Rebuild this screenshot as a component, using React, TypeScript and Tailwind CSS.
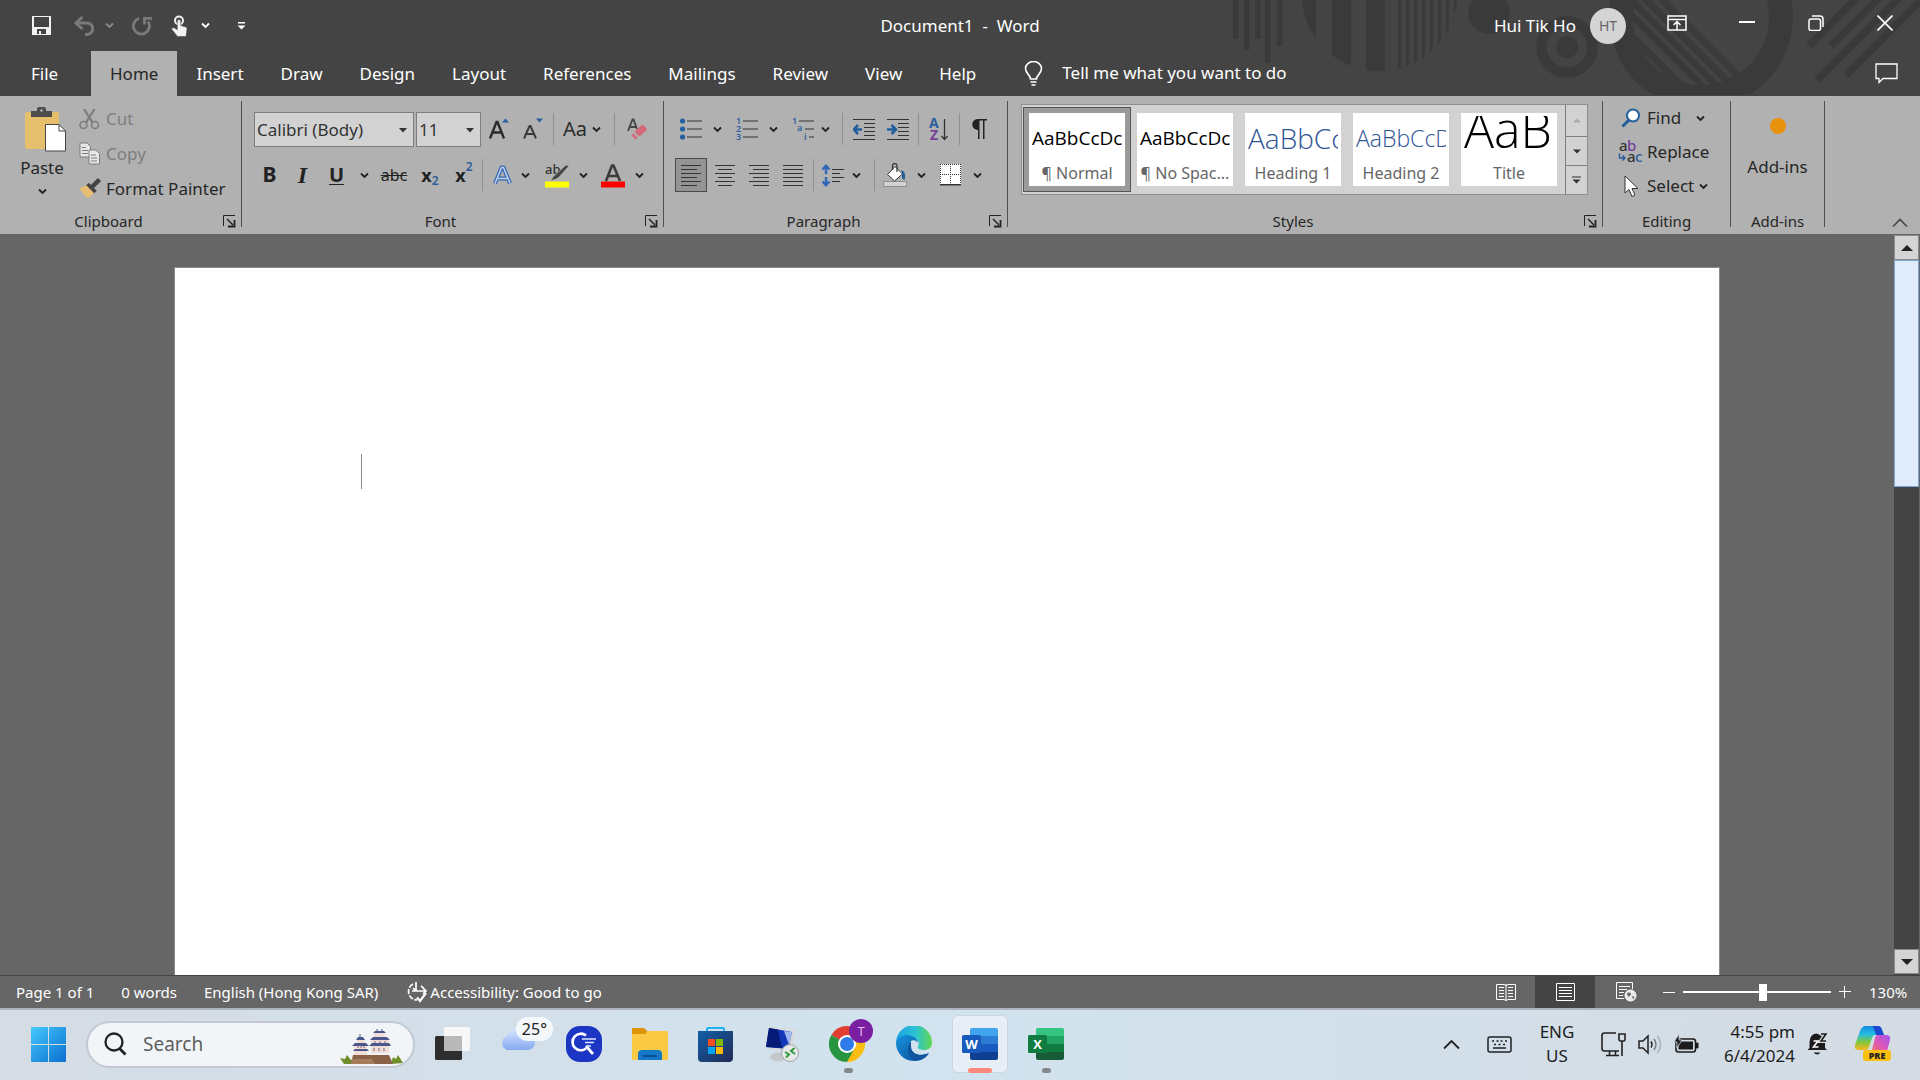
import React from "react";

type Kids = { children?: React.ReactNode };

function Chev({ className = "text-[#222]" }: { className?: string }) {
  return (
    <svg width="9" height="7" viewBox="0 0 9 7" fill="none" className={`shrink-0 ${className}`} aria-hidden="true">
      <path d="M1 1.5 4.5 5 8 1.5" stroke="currentColor" strokeWidth="1.8" />
    </svg>
  );
}

function Btn({ w, label, className = "", children }: Kids & { w: string; label: string; className?: string }) {
  return (
    <button aria-label={label} className={`flex h-[34px] shrink-0 items-center justify-center ${w} ${className}`}>
      {children}
    </button>
  );
}

function Sep() {
  return <span className="h-8 w-px shrink-0 bg-[#8f8f8f]" />;
}

function Launcher({ label }: { label: string }) {
  return (
    <button aria-label={label} className="flex w-6 items-center justify-center">
      <svg width="13" height="13" viewBox="0 0 13 13" fill="none" stroke="#222" aria-hidden="true">
        <path d="M.5 11V.5H12" />
        <path d="M4 4l6 6" strokeWidth="1.4" />
        <path d="M11.5 5v6.5H5" strokeWidth="1.8" />
      </svg>
    </button>
  );
}

function Group({ title, w, launcher, children }: Kids & { title: string; w: string; launcher?: boolean }) {
  return (
    <section aria-label={title} className={`flex shrink-0 pt-[5px] ${w}`}>
      <div className="flex min-w-0 flex-1 flex-col">
        <div className="flex-1">{children}</div>
        <div className="mb-[3px] flex h-5 items-center text-[15px] leading-5 text-[#262626]">
          <span className="flex-1 text-center">{title}</span>
          {launcher && <Launcher label={`${title} settings`} />}
        </div>
      </div>
      <div className="mb-[7px] w-px bg-[#4f4f4f]" />
    </section>
  );
}

function HeaderArt() {
  const bars: [number, number][] = [[33, 39], [44, 50], [55, 39], [65, 63], [77, 46]];
  const stripes: [number, number][] = [
    [102, 14], [132, 19], [166, 19], [198, 3], [206, 3], [214, 3], [222, 3], [230, 3], [238, 3], [246, 3], [254, 3],
  ];
  return (
    <svg className="absolute right-0 top-0" width="720" height="96" viewBox="0 0 720 96" fill="#3a3a3a" aria-hidden="true">
      <defs>
        <clipPath id="disc"><circle cx="179.5" cy="-6.8" r="78" /></clipPath>
        <clipPath id="hole"><circle cx="501" cy="17" r="68" /></clipPath>
      </defs>
      {bars.map(([x, h]) => <rect key={x} x={x} y="0" width="5.5" height={h} />)}
      <g clipPath="url(#disc)">
        {stripes.map(([x, w]) => <rect key={x} x={x} y="0" width={w} height="80" />)}
      </g>
      <circle cx="289" cy="13" r="20.7" />
      <circle cx="367" cy="47" r="25.5" fill="none" stroke="#3a3a3a" strokeWidth="10.5" />
      <circle cx="367" cy="47" r="11" />
      <path d="M453 95a92 92 0 1 1 96 0z" />
      <circle cx="501" cy="17" r="68" fill="#444" />
      <g clipPath="url(#hole)" stroke="#3a3a3a" strokeWidth="7">
        {[462, 446, 431, 416, 396].map((x) => <path key={x} d={`M${x - 20} -20 L${x + 110} 110`} />)}
      </g>
      <g stroke="#3a3a3a" strokeWidth="7.5">
        <path d="M609 46 L665 -10M631 46 L687 -10M617 80 L707 -10M646 75 L731 -10" />
      </g>
    </svg>
  );
}

function TitleBar() {
  return (
    <div className="relative flex h-[51px] items-center text-white">
      <div className="flex flex-1 items-center">
        <button aria-label="Save" className="ml-8 flex h-8 w-[19px] items-center">
          <svg width="19" height="19" viewBox="0 0 19 19" aria-hidden="true">
            <path d="M0 0h19v19H0z" fill="#f2f2f2" />
            <path d="M2 1h15v10H2z" fill="#444" />
            <path d="M5 13h9v5H5z" fill="#444" />
            <path d="M7 15h2v4H7z" fill="#f2f2f2" />
          </svg>
        </button>
        <button aria-label="Undo" className="ml-[22px] flex h-8 w-6 items-center">
          <svg width="23" height="20" viewBox="0 0 23 20" fill="none" stroke="#7a7a7a" strokeWidth="3" aria-hidden="true">
            <path d="M2 7h12a5.600 5.600 0 0 1 0 11.400h-2" />
            <path d="M9.500 1 3 7l6.500 6" />
          </svg>
        </button>
        <button aria-label="Undo history" className="ml-2 flex h-8 w-3 items-center"><Chev className="text-[#8a8a8a]" /></button>
        <button aria-label="Redo" className="ml-[15px] flex h-8 w-5 items-center">
          <svg width="20" height="20" viewBox="0 0 20 20" fill="none" stroke="#7a7a7a" strokeWidth="2.800" aria-hidden="true">
            <path d="M7 2.400A8 8 0 1 0 16 5.500" />
            <path d="M12.500 8.500V2.400H20" />
          </svg>
        </button>
        <button aria-label="Touch mode" className="ml-[19px] flex h-8 w-[18px] items-center">
          <svg width="17" height="22" viewBox="0 0 17 22" aria-hidden="true">
            <circle cx="8" cy="5.500" r="4" fill="none" stroke="#f2f2f2" strokeWidth="2" />
            <path d="M6.300 5.500q1.700-2 3.400 0v5l5 1.500q1.500.5 1.300 2L15 21.500H6.500L.5 14q1-2 3-1l2.800 1.800z" fill="#f2f2f2" stroke="#444" strokeWidth=".5" />
          </svg>
        </button>
        <button aria-label="Touch mode options" className="ml-3 flex h-8 w-3 items-center"><Chev className="text-white" /></button>
        <button aria-label="Customize quick access" className="ml-6 flex h-8 w-3 items-center">
          <svg width="9" height="8" viewBox="0 0 9 8" fill="#fff" aria-hidden="true"><path d="M1 0h7v1.500H1zM.5 3.500h8L4.500 7.500z" /></svg>
        </button>
      </div>
      <h1 className="whitespace-pre text-[17px] leading-6">{"Document1  -  Word"}</h1>
      <div className="flex flex-1 items-center justify-end">
        <span className="text-[17px]">Hui Tik Ho</span>
        <button aria-label="Account" className="ml-[14px] flex h-9 w-9 items-center justify-center rounded-full bg-[#d4d4d4] text-sm text-[#666]">HT</button>
        <button aria-label="Ribbon display options" className="ml-[41px] mb-[5px]">
          <svg width="20" height="16" viewBox="0 0 20 16" fill="none" stroke="#fff" strokeWidth="1.500" aria-hidden="true">
            <path d="M1 1h18v14H1zM1 4.500h18M10 15V7M6.500 10 10 6.500l3.500 3.500" />
          </svg>
        </button>
        <button aria-label="Minimize" className="ml-[52px] mb-[7px]">
          <svg width="16" height="2" viewBox="0 0 16 2" fill="#fff" aria-hidden="true"><path d="M0 0h16v2H0z" /></svg>
        </button>
        <button aria-label="Restore" className="ml-[53px] mb-[5px]">
          <svg width="16" height="16" viewBox="0 0 16 16" fill="none" stroke="#fff" strokeWidth="1.500" aria-hidden="true">
            <rect x="1" y="4" width="11.500" height="11.500" rx="2" />
            <path d="M4 1h8a3 3 0 0 1 3 3v8" />
          </svg>
        </button>
        <button aria-label="Close" className="ml-[53px] mr-[27px] mb-[5px]">
          <svg width="16" height="16" viewBox="0 0 16 16" stroke="#fff" strokeWidth="1.600" aria-hidden="true"><path d="M.5.5l15 15M15.500.5l-15 15" /></svg>
        </button>
      </div>
    </div>
  );
}

const tabs = ["Insert", "Draw", "Design", "Layout", "References", "Mailings", "Review", "View", "Help"];

function Tabs() {
  return (
    <nav className="relative flex h-[45px] items-stretch text-[17px] text-white">
      <button className="w-[91px] pl-[31px] text-left">File</button>
      <button className="bg-[#b1b1b1] px-[19px] text-[#262626]">Home</button>
      {tabs.map((t) => <button key={t} className="pl-[19px] pr-[18px]">{t}</button>)}
      <label className="ml-[30px] flex items-center gap-[18px]">
        <svg width="20" height="25" viewBox="0 0 20 25" fill="none" stroke="#fff" strokeWidth="1.600" aria-hidden="true">
          <path d="M6.500 18c0-4-5-5.500-5-10.500a8 7 0 0 1 16 0c0 5-5 6.500-5 10.500z" />
          <path d="M6.500 21h6M7.500 24h4" />
        </svg>
        <input aria-label="Tell me what you want to do" placeholder="Tell me what you want to do" className="w-64 bg-transparent pb-[2px] placeholder:text-white" />
      </label>
      <button aria-label="Comments" className="ml-auto mr-[22px]">
        <svg width="23" height="21" viewBox="0 0 23 21" fill="none" stroke="#fff" strokeWidth="1.300" aria-hidden="true">
          <path d="M1 1h21v14.500H8L4 19.500v-4H1z" />
        </svg>
      </button>
    </nav>
  );
}

function Clipboard() {
  return (
    <Group title="Clipboard" w="w-[242px]" launcher>
      <div className="flex text-[17px] text-[#262626]">
        <button className="ml-[14px] flex w-[56px] flex-col items-center pt-[5px]">
          <svg width="44" height="47" viewBox="0 0 44 47" className="ml-2" aria-hidden="true">
            <rect x="1" y="6" width="34" height="37" rx="2" fill="#e6bf6d" />
            <path d="M7 11V5h6V3q0-2 2-2h5q2 0 2 2v2h6v6z" fill="#4d4d4d" />
            <circle cx="17.500" cy="4.500" r="1.300" fill="#b1b1b1" />
            <path d="M21.500 18.500H35l6.500 6.500v20h-20z" fill="#fff" stroke="#444" />
            <path d="M35 18.500V25h6.500" fill="none" stroke="#444" />
          </svg>
          <span className="mt-[3px] leading-6">Paste</span>
          <span className="mt-2"><Chev /></span>
        </button>
        <div className="ml-[9px] flex flex-col">
          <button className="flex h-[35px] items-center gap-[6px] text-[#7d7d7d]">
            <svg width="21" height="22" viewBox="0 0 21 22" fill="none" stroke="#7d7d7d" strokeWidth="1.600" aria-hidden="true">
              <circle cx="4.500" cy="17" r="3.500" /><circle cx="16" cy="17" r="3.500" />
              <path d="M5 1l8.500 13.500M15.500 1 7 14.500" strokeWidth="2.200" />
            </svg>
            Cut
          </button>
          <button className="flex h-[35px] items-center gap-[6px] text-[#7d7d7d]">
            <svg width="21" height="23" viewBox="0 0 21 23" fill="#e6e6e6" stroke="#7d7d7d" aria-hidden="true">
              <path d="M1 1h7l3.500 3.500V15H1zM3 5.500h4M3 8.500h6M3 11.500h6" />
              <path d="M10 8h7l3.500 3.500V22H10zM12 13h5M12 16h6M12 19h6" />
            </svg>
            Copy
          </button>
          <button className="flex h-[35px] items-center gap-[5px] whitespace-nowrap">
            <svg width="22" height="21" viewBox="0 0 22 21" aria-hidden="true">
              <path d="M8 6l8 8-7 6.500Q3 15 0 10q5 0 8-4z" fill="#e6bd72" />
              <path d="M8.500 6l8 8" stroke="#444" strokeWidth="3.500" />
              <path d="M13 9l7.500-7.500" stroke="#444" strokeWidth="4.500" />
            </svg>
            Format Painter
          </button>
        </div>
      </div>
    </Group>
  );
}

function Combo({ label, value, w }: { label: string; value: string; w: string }) {
  return (
    <div className={`relative h-[35px] border border-[#7f7f7f] bg-[#d2d2d2] ${w}`}>
      <select aria-label={label} className="h-full w-full appearance-none bg-transparent pl-[2px] pt-px text-[17px] text-[#333]">
        <option>{value}</option>
      </select>
      <svg className="pointer-events-none absolute right-[6px] top-[15px]" width="8" height="5" viewBox="0 0 8 5" fill="#333" aria-hidden="true"><path d="M0 0h8L4 4.500z" /></svg>
    </div>
  );
}

function FontGroup() {
  return (
    <Group title="Font" w="w-[422px]" launcher>
      <div className="flex h-14 items-center pl-3 text-[#2b2b2b]">
        <Combo label="Font" value="Calibri (Body)" w="w-[160px]" />
        <span className="w-[2px]" />
        <Combo label="Font size" value="11" w="w-[65px]" />
        <Btn w="w-9" label="Grow font">
          <svg width="20" height="22" viewBox="0 0 20 22" aria-hidden="true"><path d="M1 20.500 7.500 4h1L15 20.500M3.500 14.500h9" fill="none" stroke="#2b2b2b" strokeWidth="2.400" /><path d="M13 4.500h7L16.500.5z" fill="#2b5f9e" /></svg>
        </Btn>
        <Btn w="w-[32px]" label="Shrink font">
          <svg width="20" height="22" viewBox="0 0 20 22" aria-hidden="true"><path d="M1 20.500 6.500 8h1L13 20.500M3.500 16h7" fill="none" stroke="#3b3b3b" strokeWidth="2" /><path d="M13 .5h7l-3.500 4z" fill="#2b5f9e" /></svg>
        </Btn>
        <span className="w-[4px]" />
        <Sep />
        <button className="flex h-[34px] w-[60px] items-center justify-center gap-[5px] pr-1 text-[20px] leading-6">Aa <Chev /></button>
        <Sep />
        <Btn w="w-[44px]" label="Clear formatting">
          <svg width="20" height="22" viewBox="0 0 20 22" aria-hidden="true">
            <path d="M1 13 5.500 1.500h1L10 11M3 9h6" fill="none" stroke="#444" strokeWidth="1.800" />
            <rect x="8.500" y="9" width="11" height="7" rx="1.500" transform="rotate(-42 14 12.500)" fill="#d4697a" />
            <path d="M4.500 17.500l4 4 2-2-4-4z" fill="#d4697a" />
          </svg>
        </Btn>
      </div>
      <div className="flex h-9 items-center pl-[11px] text-[#222]">
        <Btn w="w-[33px]" label="Bold"><span className="text-[21px] font-bold">B</span></Btn>
        <Btn w="w-[33px]" label="Italic"><span className="font-['Liberation_Serif',serif] text-[24px] font-bold italic">I</span></Btn>
        <Btn w="w-[35px]" label="Underline"><span className="border-b border-[#222] text-[20px] font-bold leading-[18px]">U</span></Btn>
        <Btn w="w-[20px]" label="Underline options"><Chev /></Btn>
        <Btn w="w-[40px]" label="Strikethrough"><span className="text-base line-through">abc</span></Btn>
        <Btn w="w-[32px]" label="Subscript">
          <span className="text-lg font-bold">x</span><span className="pt-3 text-xs font-semibold text-[#2b5f9e]">2</span>
        </Btn>
        <Btn w="w-[36px]" label="Superscript">
          <span className="text-lg font-bold">x</span><span className="pb-4 text-xs font-semibold text-[#2b5f9e]">2</span>
        </Btn>
        <Sep />
        <Btn w="w-[38px]" label="Text effects">
          <svg width="19" height="21" viewBox="0 0 19 21" fill="none" strokeLinejoin="round" aria-hidden="true">
            <path d="M2 18.500 8.500 2.500h2L17 18.500M5 13.500h9" stroke="#2f66b5" strokeWidth="4" />
            <path d="M2 18.500 8.500 2.500h2L17 18.500M5 13.500h9" stroke="#c3cfe3" strokeWidth="1.600" />
          </svg>
        </Btn>
        <Btn w="w-[9px]" label="Text effect options"><Chev /></Btn>
        <span className="w-[11px]" />
        <Btn w="w-[32px]" label="Highlight">
          <svg width="24" height="25" viewBox="0 0 24 25" className="overflow-visible" aria-hidden="true">
            <text x="0" y="11" fontSize="13" fontWeight="500" fill="#333" fontFamily="Noto Sans, sans-serif">ab</text>
            <path d="M6 18l2-4 13-12 3 1-11 12z" fill="#444" stroke="#b1b1b1" strokeWidth=".6" />
            <path d="M0 18.500h24v6H0z" fill="#ff0" />
          </svg>
        </Btn>
        <Btn w="w-[20px]" label="Highlight options"><Chev /></Btn>
        <span className="w-[2px]" />
        <Btn w="w-[36px]" label="Font color">
          <svg width="24" height="25" viewBox="0 0 24 25" aria-hidden="true">
            <path d="M5 18 11 2.500h1.500L19 18M7 13h9.500" fill="none" stroke="#3b3b3b" strokeWidth="2.600" />
            <path d="M0 18.500h24v6H0z" fill="#f00" />
          </svg>
        </Btn>
        <Btn w="w-[16px]" label="Font color options"><Chev /></Btn>
      </div>
    </Group>
  );
}

function Lines({ rows }: { rows: [number, number][] }) {
  return (
    <svg width="20" height="21" viewBox="0 0 20 21" fill="#333" aria-hidden="true">
      {rows.map(([x, w], i) => <rect key={i} x={x} y={i * 4} width={w} height="1" />)}
    </svg>
  );
}

function Indent({ right }: { right?: boolean }) {
  return (
    <svg width="22" height="21" viewBox="0 0 22 21" aria-hidden="true">
      <path d="M0 0h22v1H0zM11 4h11v1H11zM11 8h11v1H11zM11 12h11v1H11zM11 16h11v1H11zM0 20h22v1H0z" fill="#333" />
      <path d={right ? "M0 10.500h8M4.500 6 9 10.500 4.500 15" : "M9 10.500H1M5 6 .8 10.500 5 15"} fill="none" stroke="#225f9f" strokeWidth="2.600" />
    </svg>
  );
}

const marker = { fontSize: 9, fontWeight: 600, fill: "#2b5f9e", fontFamily: "Noto Sans, sans-serif" };

function ParagraphGroup() {
  return (
    <Group title="Paragraph" w="w-[344px]" launcher>
      <div className="flex h-14 items-center pl-[11px]">
        <Btn w="w-[32px]" label="Bullets">
          <svg width="22" height="22" viewBox="0 0 22 22" aria-hidden="true">
            <g fill="#225f9f"><circle cx="2.500" cy="3" r="2.600" /><circle cx="2.500" cy="11" r="2.600" /><circle cx="2.500" cy="19" r="2.600" /></g>
            <path d="M7 2.500h15v1H7zM7 10.500h15v1H7zM7 18.500h15v1H7z" fill="#333" />
          </svg>
        </Btn>
        <Btn w="w-[20px]" label="Bullet options"><Chev /></Btn>
        <span className="w-[4px]" />
        <Btn w="w-[32px]" label="Numbering">
          <svg width="22" height="24" viewBox="0 0 22 24" className="overflow-visible" aria-hidden="true">
            <g {...marker}><text x="0" y="7">1</text><text x="0" y="15">2</text><text x="0" y="23">3</text></g>
            <path d="M7 3.500h15v1H7zM7 11.500h15v1H7zM7 19.500h15v1H7z" fill="#333" />
          </svg>
        </Btn>
        <Btn w="w-[20px]" label="Numbering options"><Chev /></Btn>
        <span className="w-[4px]" />
        <Btn w="w-[32px]" label="Multilevel list">
          <svg width="22" height="24" viewBox="0 0 22 24" className="overflow-visible" aria-hidden="true">
            <g {...marker}><text x="0" y="7">1</text><text x="5" y="14">a</text><text x="12" y="23">i</text></g>
            <path d="M7 3.500h15v1H7zM13 11.500h9v1h-9zM17 19.500h5v1h-5z" fill="#333" />
          </svg>
        </Btn>
        <Btn w="w-[13px]" label="Multilevel list options"><Chev /></Btn>
        <span className="w-[10px]" />
        <Sep />
        <span className="w-1" />
        <Btn w="w-[34px]" label="Decrease indent"><Indent /></Btn>
        <Btn w="w-[34px]" label="Increase indent"><Indent right /></Btn>
        <span className="w-[3px]" />
        <Sep />
        <Btn w="w-[40px]" label="Sort">
          <svg width="20" height="24" viewBox="0 0 20 24" className="overflow-visible" aria-hidden="true">
            <text x="0" y="11" fontSize="14" fontWeight="700" fill="#2b5f9e" fontFamily="Noto Sans, sans-serif">A</text>
            <text x="1" y="23" fontSize="14" fontWeight="700" fill="#75409a" fontFamily="Noto Sans, sans-serif">Z</text>
            <path d="M15.500 2v20M12.500 19l3 3.500 3-3.500" fill="none" stroke="#333" strokeWidth="1.300" />
          </svg>
        </Btn>
        <Sep />
        <Btn w="w-[38px]" label="Show formatting marks">
          <svg width="16" height="21" viewBox="0 0 16 21" fill="#222" aria-hidden="true">
            <path d="M6.500 0H16v1.500h-2.500V20H12V1.500H8.500V20H7v-9a5.500 5.500 0 0 1-.5-11z" />
          </svg>
        </Btn>
      </div>
      <div className="flex h-9 items-center pl-[11px]">
        <button aria-label="Align left" className="flex h-[34px] w-8 items-center justify-center border border-[#4a4a4a] bg-[#949494]">
          <Lines rows={[[0, 20], [0, 16], [0, 20], [0, 16], [0, 20], [0, 16]]} />
        </button>
        <span className="w-px" />
        <Btn w="w-[34px]" label="Center"><Lines rows={[[0, 20], [3, 14], [0, 20], [3, 14], [0, 20], [3, 14]]} /></Btn>
        <Btn w="w-[34px]" label="Align right"><Lines rows={[[0, 20], [4, 16], [0, 20], [4, 16], [0, 20], [4, 16]]} /></Btn>
        <Btn w="w-[34px]" label="Justify"><Lines rows={[[0, 20], [0, 20], [0, 20], [0, 20], [0, 20], [0, 20]]} /></Btn>
        <span className="w-[3px]" />
        <Sep />
        <span className="w-[3px]" />
        <Btn w="w-[32px]" label="Line spacing">
          <svg width="22" height="23" viewBox="0 0 22 23" aria-hidden="true">
            <path d="M4 1.500V10M4 13v8.500M.5 5.500 4 1.800l3.500 3.700M.5 17.500 4 21.200l3.500-3.700" fill="none" stroke="#2f66b5" strokeWidth="2.400" />
            <path d="M10 5h12v1H10zM10 9h8v1h-8zM10 13h12v1H10zM10 17h8v1h-8z" fill="#333" />
          </svg>
        </Btn>
        <Btn w="w-[14px]" label="Line spacing options"><Chev /></Btn>
        <span className="w-[11px]" />
        <Sep />
        <span className="w-1" />
        <Btn w="w-[32px]" label="Shading">
          <svg width="25" height="25" viewBox="0 0 25 25" aria-hidden="true">
            <path d="M.5 18.500h23v5H.5z" fill="#d2d2d2" stroke="#8f8f8f" />
            <path d="M18 7q5 1 4 9-1.500 1.500-3-1V9z" fill="#225f9f" />
            <path d="M4.500 11.500 12 3.500l7.500 7.500-8 7z" fill="#fff" stroke="#333" />
            <path d="M9.500 7V3q0-2.500 2.200-2.500T14 3v6" fill="none" stroke="#333" strokeWidth="1.200" />
          </svg>
        </Btn>
        <Btn w="w-[20px]" label="Shading options"><Chev /></Btn>
        <Btn w="w-[38px]" label="Borders">
          <svg width="21" height="22" viewBox="0 0 21 22" aria-hidden="true">
            <path d="M0 0h21v21H0z" fill="#fff" />
            <path d="M.5 0v21M20.500 0v21M10.500 0v21M0 .5h21M0 10.500h21" stroke="#333" strokeDasharray="1 1" />
            <path d="M0 20h21v1.500H0z" fill="#333" />
          </svg>
        </Btn>
        <Btn w="w-[16px]" label="Border options"><Chev /></Btn>
      </div>
    </Group>
  );
}

const styleCards = [
  { name: "¶ Normal", sample: "AaBbCcDc", cls: "text-[19px] text-black" },
  { name: "¶ No Spac...", sample: "AaBbCcDc", cls: "text-[19px] text-black" },
  { name: "Heading 1", sample: "AaBbCc", cls: "text-[28px] font-light text-[#2f5496]" },
  { name: "Heading 2", sample: "AaBbCcD", cls: "text-[23px] font-light text-[#2f5496]" },
  { name: "Title", sample: "AaB", cls: "pb-[18px] text-[50px] font-light text-black" },
];

function StylesGroup() {
  return (
    <Group title="Styles" w="w-[595px]" launcher>
      <div className="ml-[13px] mt-[3px] flex h-[91px] w-[567px] border border-[#8f8f8f] bg-[#d2d2d2]">
        <div className="flex flex-1 py-[2px] pl-px">
          {styleCards.map((s, i) => (
            <button key={s.name} className={`flex w-[108px] border p-[5px] ${i === 0 ? "border-[#555] bg-[#9b9b9b]" : "border-transparent"}`}>
              <span className="flex h-[73px] w-[96px] flex-col bg-white">
                <span className={`mx-[3px] mt-[3px] flex h-[44px] items-center overflow-hidden whitespace-nowrap font-['Open_Sans',sans-serif] ${s.cls}`}>{s.sample}</span>
                <span className="overflow-hidden whitespace-nowrap text-center text-base leading-[26px] text-[#666]">{s.name}</span>
              </span>
            </button>
          ))}
        </div>
        <div className="flex w-[22px] flex-col border-l border-[#7f7f7f]">
          <button aria-label="Previous styles" className="flex h-[31px] items-center justify-center">
            <svg width="8" height="5" fill="#aaa" aria-hidden="true"><path d="M0 4.500h8L4 .5z" /></svg>
          </button>
          <button aria-label="Next styles" className="flex flex-1 items-center justify-center border-y border-[#7f7f7f]">
            <svg width="8" height="5" fill="#333" aria-hidden="true"><path d="M0 .5h8L4 4.500z" /></svg>
          </button>
          <button aria-label="All styles" className="flex h-[28px] items-center justify-center">
            <svg width="9" height="8" fill="#333" aria-hidden="true"><path d="M0 .5h9v1H0zM.5 3.500h8l-4 4z" /></svg>
          </button>
        </div>
      </div>
    </Group>
  );
}

function EditingGroup() {
  return (
    <Group title="Editing" w="w-[128px]">
      <div className="flex flex-col pl-[15px] text-[17px] text-[#262626]">
        <button className="flex h-[34px] items-center">
          <svg width="20" height="20" viewBox="0 0 20 20" className="ml-[3px] mr-[6px]" aria-hidden="true">
            <path d="M1.500 18.500 8 12" stroke="#225f9f" strokeWidth="3" /><circle cx="12" cy="7.500" r="6" fill="#fff" stroke="#225f9f" strokeWidth="2" />
          </svg>
          Find <span className="ml-[15px]"><Chev /></span>
        </button>
        <button className="flex h-[34px] items-center">
          <svg width="24" height="24" viewBox="0 0 24 24" className="mr-[5px] overflow-visible" fontFamily="Noto Sans, sans-serif" fontSize="15" fontWeight="500" aria-hidden="true">
            <text x="1" y="11" fill="#333">a</text><text x="9" y="11" fill="#75409a">b</text>
            <text x="9" y="22" fill="#333">a</text><text x="17" y="22" fill="#2b5f9e">c</text>
            <path d="M1.500 13.500v4.500h5M4.500 15.500 7 18l-2.500 2.500" fill="none" stroke="#2b5f9e" strokeWidth="1.500" />
          </svg>
          Replace
        </button>
        <button className="flex h-[34px] items-center">
          <svg width="15" height="23" viewBox="0 0 15 23" className="ml-[6px] mr-2" aria-hidden="true">
            <path d="M1 1v17l4-3.500 3 7 3-1.500-3-6.500h6z" fill="#fff" stroke="#333" />
          </svg>
          Select <span className="ml-[5px]"><Chev /></span>
        </button>
      </div>
    </Group>
  );
}

function Ribbon() {
  return (
    <div className="flex h-[138px] shrink-0 bg-[#b1b1b1]">
      <Clipboard />
      <FontGroup />
      <ParagraphGroup />
      <StylesGroup />
      <EditingGroup />
      <Group title="Add-ins" w="w-[94px]">
        <button className="flex w-full flex-col items-center pt-[17px] text-[17px] text-[#262626]">
          <span className="h-4 w-4 rounded-full bg-[#e8920c]" />
          <span className="mt-[21px] leading-6">Add-ins</span>
        </button>
      </Group>
      <button aria-label="Collapse ribbon" className="ml-auto mr-3 self-end pb-[6px]">
        <svg width="16" height="10" viewBox="0 0 16 10" fill="none" stroke="#444" strokeWidth="1.600" aria-hidden="true"><path d="M1 8.500 8 1.500l7 7" /></svg>
      </button>
    </div>
  );
}

function Workspace() {
  return (
    <main className="flex min-h-0 flex-1 bg-[#666]">
      <div className="flex min-w-0 flex-1 justify-center pt-[33px]">
        <div role="textbox" aria-label="Document" className="w-[1546px] max-w-full border border-b-0 border-[#8a8a8a] bg-white pl-[186px] pt-[186px]">
          <div className="h-[35px] w-px bg-[#8a8a8a]" />
        </div>
      </div>
      <div className="mt-px mr-px flex w-[25px] flex-col bg-[#444] pb-px">
        <button aria-label="Scroll up" className="flex h-[25px] items-center justify-center border border-[#8a8a8a] bg-[#d4d4d4]">
          <svg width="12" height="6" fill="#222" aria-hidden="true"><path d="M0 6h12L6 0z" /></svg>
        </button>
        <div className="h-[227px] border border-[#7ba7d8] bg-[#e0ebfb]" />
        <button aria-label="Scroll down" className="mt-auto flex h-[25px] items-center justify-center border border-[#8a8a8a] bg-[#d4d4d4]">
          <svg width="12" height="6" fill="#222" aria-hidden="true"><path d="M0 0h12L6 6z" /></svg>
        </button>
      </div>
    </main>
  );
}

function StatusBar() {
  return (
    <footer className="flex h-[33px] shrink-0 items-center border-t border-[#444] bg-[#666] text-[15px] text-white">
      <button className="ml-4">Page 1 of 1</button>
      <button className="ml-[27px]">0 words</button>
      <button className="ml-[27px]">English (Hong Kong SAR)</button>
      <button className="ml-[28px] flex items-center gap-[2px]">
        <svg width="22" height="22" viewBox="0 0 22 22" fill="none" stroke="#fff" strokeWidth="1.700" aria-hidden="true">
          <path d="M7 3a8.500 8.500 0 0 0 4 16" strokeDasharray="5 1.500" />
          <path d="M10 1v9M6 10h14M17 7l3 3-3 3M7 7l3 3M15 5a8 8 0 0 1 3 3" />
          <path d="M11 16.500l3 3.500 6-8" strokeWidth="2.200" />
        </svg>
        Accessibility: Good to go
      </button>
      <div className="ml-auto flex h-full items-center">
        <button aria-label="Read mode" className="flex h-full w-[59px] items-center justify-center">
          <svg width="20" height="19" viewBox="0 0 20 19" fill="none" stroke="#fff" aria-hidden="true">
            <path d="M.5 1.500H8l2 1 2-1h7.500v15H12l-2 1-2-1H.5zM10 1v17M3 4.500h5M3 7.500h5M3 10.500h5M3 13.500h5M12 4.500h5M12 7.500h5M12 10.500h5M12 13.500h5" />
          </svg>
        </button>
        <button aria-label="Print layout" className="flex h-full w-[60px] items-center justify-center bg-[#444]">
          <svg width="19" height="18" viewBox="0 0 19 18" fill="none" stroke="#fff" aria-hidden="true"><path d="M.5.5h18v17H.5zM3 4.500h13M3 7.500h13M3 10.500h13M3 13.500h13" /></svg>
        </button>
        <button aria-label="Web layout" className="flex h-full w-[62px] items-center justify-center">
          <svg width="21" height="20" viewBox="0 0 21 20" fill="none" stroke="#fff" aria-hidden="true">
            <path d="M8 16.500H.5V.5h16V7M3 4.500h11M3 7.500h8M3 10.500h5M3 13.500h4" />
            <circle cx="14.500" cy="13.500" r="5.500" fill="#e8e8e8" />
            <path d="M11 11q2.500-1 4 .5l-1 2.500-2 .5zM16 14l2.500 1-1.500 2.500z" fill="#666" stroke="none" />
          </svg>
        </button>
        <button aria-label="Zoom out" className="ml-1 flex h-5 w-4 items-center justify-center"><svg width="12" height="1" aria-hidden="true"><path d="M0 0h12v1H0z" fill="#fff" /></svg></button>
        <input
          type="range" aria-label="Zoom" min="0" max="100" defaultValue="54"
          className="mx-[6px] h-[2px] w-[148px] appearance-none bg-white [&::-webkit-slider-thumb]:h-[17px] [&::-webkit-slider-thumb]:w-2 [&::-webkit-slider-thumb]:appearance-none [&::-webkit-slider-thumb]:bg-white"
        />
        <button aria-label="Zoom in" className="flex h-5 w-4 items-center justify-center"><svg width="12" height="12" aria-hidden="true"><path d="M0 5.500h12M5.500 0v12" stroke="#fff" /></svg></button>
        <button className="ml-4 w-[51px] text-left">130%</button>
      </div>
    </footer>
  );
}

function Castle() {
  return (
    <svg width="64" height="36" viewBox="0 0 64 36" aria-hidden="true">
      <path d="M1 29l5 1 2-4 4 5 3-1v5H5zM52 35l2-7 3 2 2-4 5 8z" fill="#6f8f2a" />
      <path d="M12 35l2-9h36l4 9z" fill="#8a6248" /><path d="M12 35l1-5h20l3 5z" fill="#a67c5c" />
      <path d="M15 16h13v10H15zM32 9h18v15H32z" fill="#f1dcd6" />
      <path d="M13 17l3-3h11l3 3zM14 22l2-2h12l2 2zM17 11l2-3h5l2 3zM31 11l3-3h14l3 3zM30 17l3-3h17l2 3zM34 4l2-2h9l2 2z" fill="#4b568c" />
      <path d="M18 11h8v3h-8zM35 4h11v4H35z" fill="#f1dcd6" />
      <path d="M21 5v4M38 0v3M43 0v3" stroke="#4b568c" />
      <path d="M19 17v2M22 17v2M25 17v2M36 12v2M41 12v2M46 12v2M35 19v3M40 19v3M45 19v3" stroke="#77678a" />
    </svg>
  );
}

function TaskIcon({ label, active, dot, children }: Kids & { label: string; active?: boolean; dot?: boolean }) {
  return (
    <button aria-label={label} className="flex w-[66px] justify-center">
      <span className={`relative flex h-[58px] w-14 items-center justify-center rounded-md ${active ? "border border-[#cbd6df] bg-[#e8eef5]" : ""}`}>
        {children}
        {active && <span className="absolute -bottom-px h-[5px] w-6 rounded-full bg-[#fb8a7c]" />}
        {dot && <span className="absolute bottom-0 h-[5px] w-[9px] rounded-full bg-[#83888d]" />}
      </span>
    </button>
  );
}

function Office({ letter, colors, badge }: { letter: string; colors: string[]; badge: string }) {
  return (
    <svg width="36" height="32" viewBox="0 0 36 32" aria-hidden="true">
      <clipPath id={`page-${letter}`}><rect x="8" y="0" width="28" height="32" rx="2" /></clipPath>
      <g clipPath={`url(#page-${letter})`}>
        {colors.map((c, i) => <rect key={c} x="8" y={i * 8} width="28" height="8" fill={c} />)}
      </g>
      <rect x="0" y="7" width="19" height="18" rx="1.500" fill={badge} />
      <text x="9.500" y="20.500" textAnchor="middle" fontFamily="Open Sans, sans-serif" fontSize="13" fontWeight="700" fill="#fff">{letter}</text>
    </svg>
  );
}

function Taskbar() {
  return (
    <div className="flex h-[72px] shrink-0 items-center border-t-2 border-[#adb4bf] bg-linear-to-r from-[#d5dce4] via-[#d1e3ef] to-[#d4dbe3] pb-[2px] text-[#1c1c1c]">
      <button aria-label="Start" className="ml-[31px]">
        <svg width="35" height="35" viewBox="0 0 35 35" aria-hidden="true">
          <linearGradient id="win" x1="0" y1="0" x2="1" y2="1"><stop offset="0" stopColor="#45c8fb" /><stop offset="1" stopColor="#0a6fd0" /></linearGradient>
          <path d="M0 1q0-1 1-1h16v17H0zM18 0h16q1 0 1 1v16H18zM0 18h17v17H1q-1 0-1-1zM18 18h17v16q0 1-1 1H18z" fill="url(#win)" />
        </svg>
      </button>
      <label className="ml-5 flex h-[47px] w-[329px] items-center rounded-full border-2 border-[#c3c9d4] bg-[#f2f5f7] pl-4">
        <svg width="23" height="24" viewBox="0 0 23 24" fill="none" stroke="#222" strokeWidth="2.300" aria-hidden="true"><circle cx="10" cy="10" r="8.500" /><path d="M15.500 16.500l6 6" strokeWidth="2.800" /></svg>
        <input aria-label="Search" placeholder="Search" className="ml-4 w-full min-w-0 flex-1 bg-transparent text-[19px] placeholder:text-[#5e5e5e]" />
        <span className="mr-[10px] mt-[5px]"><Castle /></span>
      </label>
      <div className="ml-[4px] flex items-center">
        <TaskIcon label="Task view">
          <svg width="36" height="34" viewBox="0 0 36 34" aria-hidden="true">
            <rect x="1" y="9" width="27" height="24" rx="1.500" fill="#2e2e2e" /><rect x="10" y="0" width="26" height="24" rx="1.500" fill="#f7f7f7" /><path d="M10 9h18v15H10z" fill="#b9b9b9" />
          </svg>
        </TaskIcon>
        <TaskIcon label="Weather">
          <svg width="38" height="26" viewBox="0 0 38 26" className="mb-3" aria-hidden="true">
            <linearGradient id="cloud" x1="0" y1="0" x2="0" y2="1"><stop offset="0" stopColor="#dbe8ff" /><stop offset="1" stopColor="#85a9ef" /></linearGradient>
            <path d="M8 25a7.500 7.500 0 0 1 0-14A10.500 10.500 0 0 1 28 10a7.500 7.500 0 0 1 1 15z" fill="url(#cloud)" />
          </svg>
          <span className="absolute -right-[7px] top-[2px] rounded-full bg-[#f5f8fb] px-[6px] text-base leading-6 text-[#222]">25°</span>
        </TaskIcon>
        <TaskIcon label="Quick search">
          <svg width="36" height="36" viewBox="0 0 36 36" aria-hidden="true">
            <rect width="36" height="36" rx="14" fill="#1c35c2" />
            <path d="M20 9.500a8.300 8.300 0 1 0 0 13M20 20l7 8" fill="none" stroke="#fff" strokeWidth="2.700" />
            <path d="M16 13h14M19 16.500h9M20 20h5" stroke="#dce7ff" strokeWidth="1.600" />
          </svg>
        </TaskIcon>
        <TaskIcon label="File Explorer">
          <svg width="36" height="33" viewBox="0 0 36 33" aria-hidden="true">
            <path d="M0 1q0-1 1-1h11l4 4h19q1 0 1 1v5H0z" fill="#dd9407" />
            <path d="M0 6h13l3-3h19q1 0 1 1v27q0 1-1 1H1q-1 0-1-1z" fill="#fcc944" />
            <path d="M6 32v-6q0-4 4-4h16q4 0 4 4v6z" fill="#1478c6" /><path d="M11 28h14" stroke="#0a4f96" strokeWidth="2" />
          </svg>
        </TaskIcon>
        <TaskIcon label="Microsoft Store">
          <svg width="36" height="36" viewBox="0 0 36 36" aria-hidden="true">
            <linearGradient id="store" x1="0" y1="0" x2="1" y2="1"><stop offset="0" stopColor="#115fa8" /><stop offset="1" stopColor="#232b55" /></linearGradient>
            <path d="M9 6V3q0-1 1-1h15q1 0 1 1v3" fill="none" stroke="#1fb1f2" strokeWidth="2" />
            <path d="M0 5h35v27q0 4-4 4H4q-4 0-4-4z" fill="url(#store)" />
            <path d="M10 13h7v7h-7z" fill="#f25022" /><path d="M18 13h7v7h-7z" fill="#7fba00" /><path d="M10 21h7v7h-7z" fill="#00a4ef" /><path d="M18 21h7v7h-7z" fill="#ffb900" />
          </svg>
        </TaskIcon>
        <TaskIcon label="Remote Desktop">
          <svg width="36" height="36" viewBox="0 0 36 36" aria-hidden="true">
            <ellipse cx="14" cy="31" rx="8" ry="4.500" fill="#c4c7cc" />
            <path d="M4 0l28 4-5 22L1 23z" fill="#d8dade" /><path d="M5 2l23 4-4 17L2 21z" fill="#1238b8" /><path d="M5 2l9 1.500L18 22 2 21z" fill="#061a78" /><path d="M20 5l8 1-3 13z" fill="#9fb8f0" />
            <circle cx="26" cy="27" r="8.500" fill="#e8eae9" stroke="#9ea3a3" /><path d="M21 26l4 2.500-3 3M30.500 22l-3.500 3 4 3" fill="none" stroke="#2f9b3a" strokeWidth="2" />
          </svg>
        </TaskIcon>
        <TaskIcon label="Chrome" dot>
          <svg width="46" height="44" viewBox="0 0 46 44" className="mb-[8px] ml-2 shrink-0" aria-hidden="true">
            <path d="M18 26 2.400 17A18 18 0 0 1 33.600 17z" fill="#e23e31" />
            <path d="M18 26 2.400 17A18 18 0 0 0 18 44l9-13z" fill="#27943f" />
            <path d="M18 26h10L18 44A18 18 0 0 0 33.600 17H18z" fill="#fbbd12" />
            <circle cx="18" cy="26" r="9" fill="#fff" /><circle cx="18" cy="26" r="7" fill="#2f7bea" />
            <circle cx="32" cy="13" r="12" fill="#7a1fa2" />
            <text x="32" y="17.500" textAnchor="middle" fontFamily="Noto Sans, sans-serif" fontSize="13" fill="#e2b9f0">T</text>
          </svg>
        </TaskIcon>
        <TaskIcon label="Edge">
          <svg width="36" height="36" viewBox="0 0 36 36" aria-hidden="true">
            <linearGradient id="edgeTop" x1="0" x2="1"><stop offset="0" stopColor="#1ea2e6" /><stop offset=".55" stopColor="#2bc3d2" /><stop offset="1" stopColor="#62d84e" /></linearGradient>
            <linearGradient id="edgeLow" x1="0" y1="0" x2="1" y2="1"><stop offset="0" stopColor="#1593de" /><stop offset="1" stopColor="#0c4a95" /></linearGradient>
            <path d="M0 17a18 18 0 0 1 36 0c0 5-4 7-8 7-5 0-7-2-6-4 2-3 0-7-4-7H6z" fill="url(#edgeTop)" />
            <path d="M0 17c1-6 7-8 11-8 6 0 11 4 11 8-1-2-4-4-7-2-4 3-1 13 8 14 4 .500 8-1 10-2A18 18 0 0 1 0 17z" fill="url(#edgeLow)" />
            <path d="M15 15c-5 5-4 15 3 19 6 2 12-2 15-7-6 3-18 3-18-7z" fill="#0f549f" />
          </svg>
        </TaskIcon>
        <TaskIcon label="Word" active><Office letter="W" colors={["#41a5ee", "#2b7cd3", "#185abd", "#103f91"]} badge="#185abd" /></TaskIcon>
        <TaskIcon label="Excel" dot><Office letter="X" colors={["#33c481", "#21a366", "#107c41", "#185c37"]} badge="#107c41" /></TaskIcon>
      </div>
      <div className="ml-auto flex items-center">
        <button aria-label="Hidden icons"><svg width="17" height="11" viewBox="0 0 17 11" fill="none" stroke="#222" strokeWidth="1.800" aria-hidden="true"><path d="M1 9.500l7.500-7.500L16 9.500" /></svg></button>
        <button aria-label="Touch keyboard" className="ml-[27px]">
          <svg width="25" height="17" viewBox="0 0 25 17" fill="none" stroke="#222" strokeWidth="1.500" aria-hidden="true"><rect x="1" y="1" width="23" height="15" rx="2" /><path d="M5 5h2M9.500 5h2M13.500 5h2M18 5h2M7 8.500h2M11.500 8.500h2M16 8.500h2M6 12h13" strokeWidth="1.700" /></svg>
        </button>
        <button className="ml-[25px] w-10 text-[17px] leading-6">ENG<br />US</button>
        <button aria-label="Network" className="ml-6">
          <svg width="25" height="25" viewBox="0 0 25 25" fill="none" stroke="#222" strokeWidth="1.600" aria-hidden="true"><path d="M15 1H3.500Q1 1 1 3.500v13Q1 19 3.500 19H18M5 23.500h13M8.500 19v4M14.500 19v4M18 2h6v5.500q0 1.500-1.500 1.500h-3Q18 9 18 7.500zM21 9v15" /></svg>
        </button>
        <button aria-label="Volume" className="ml-3">
          <svg width="25" height="21" viewBox="0 0 25 21" fill="none" stroke="#222" strokeWidth="1.500" aria-hidden="true"><path d="M1 7h4l5-5v17l-5-5H1zM13 7.500q2 3 0 6" /><path d="M16 5q4 5.500 0 11" stroke="#777" /><path d="M19.500 2q6 8.500 0 17" stroke="#aab1b8" /></svg>
        </button>
        <button aria-label="Battery" className="ml-[11px]">
          <svg width="25" height="20" viewBox="0 0 25 20" aria-hidden="true"><rect x="2" y="5" width="19.500" height="13" rx="2.500" fill="none" stroke="#1c1c1c" strokeWidth="1.600" /><rect x="4.500" y="7.500" width="14.500" height="8" fill="#1c1c1c" /><path d="M22.500 9h1.500v5h-1.500z" fill="#1c1c1c" stroke="#1c1c1c" /><path d="M5 0L0 8h3v6l5-8H5z" fill="#1c1c1c" stroke="#d6dde4" strokeWidth=".8" /></svg>
        </button>
        <button className="ml-[14px] w-[82px] whitespace-nowrap text-right text-[17px] leading-6">4:55 pm<br />6/4/2024</button>
        <button aria-label="Notifications" className="ml-3">
          <svg width="22" height="24" viewBox="0 0 22 24" aria-hidden="true">
            <path d="M2.500 16V10Q3 1.500 10 1.500L18 6v10l2 2H.5z" fill="#1c1c1c" /><path d="M6.500 20.500h7q-3.500 4-7 0z" fill="#1c1c1c" />
            <path d="M14 2h5l-5 7h5" fill="none" stroke="#d6dde4" strokeWidth="4" /><path d="M14 2h5l-5 7h5" fill="none" stroke="#1c1c1c" strokeWidth="1.600" />
            <path d="M6.500 9h4.500l-4.500 6h5" fill="none" stroke="#fff" strokeWidth="1.600" />
          </svg>
        </button>
        <button aria-label="Copilot" className="ml-[26px] mr-[29px]">
          <svg width="36" height="36" viewBox="0 0 36 36" aria-hidden="true">
            <linearGradient id="cpL" x1="0" y1="0" x2="0" y2="1"><stop offset="0" stopColor="#1588e8" /><stop offset=".35" stopColor="#26bfe0" /><stop offset=".65" stopColor="#7ac83f" /><stop offset="1" stopColor="#f7b71c" /></linearGradient>
            <linearGradient id="cpR" x1="1" y1="0" x2="0" y2="1"><stop offset="0" stopColor="#a555ee" /><stop offset=".5" stopColor="#df57b4" /><stop offset="1" stopColor="#ff7c4a" /></linearGradient>
            <path d="M11 0h12q3 0 4 4l2 5h-8q-3 0-4 3l-3 9q-1 3-4 3H4q-5 0-4-5L5 5q2-5 6-5z" fill="url(#cpL)" />
            <path d="M17 0h6q3 0 4 4l2 5h-8l-2-6q-.5-2-2-3z" fill="#1d49cd" />
            <path d="M22 9h9q5 0 4 5l-3 11q-1 3-5 3H13q3-1 4-4l3-12q1-3 2-3z" fill="url(#cpR)" />
            <rect x="8" y="24" width="28" height="11" rx="3" fill="#fdc00f" />
            <text x="22" y="33" textAnchor="middle" fontFamily="Open Sans, sans-serif" fontSize="9" fontWeight="800" fill="#222">PRE</text>
          </svg>
        </button>
      </div>
    </div>
  );
}

export default function App() {
  return (
    <div className="flex h-screen flex-col overflow-hidden bg-[#666] font-['Noto_Sans',sans-serif]">
      <header className="relative shrink-0 bg-[#444]">
        <HeaderArt />
        <TitleBar />
        <Tabs />
      </header>
      <Ribbon />
      <Workspace />
      <StatusBar />
      <Taskbar />
    </div>
  );
}
